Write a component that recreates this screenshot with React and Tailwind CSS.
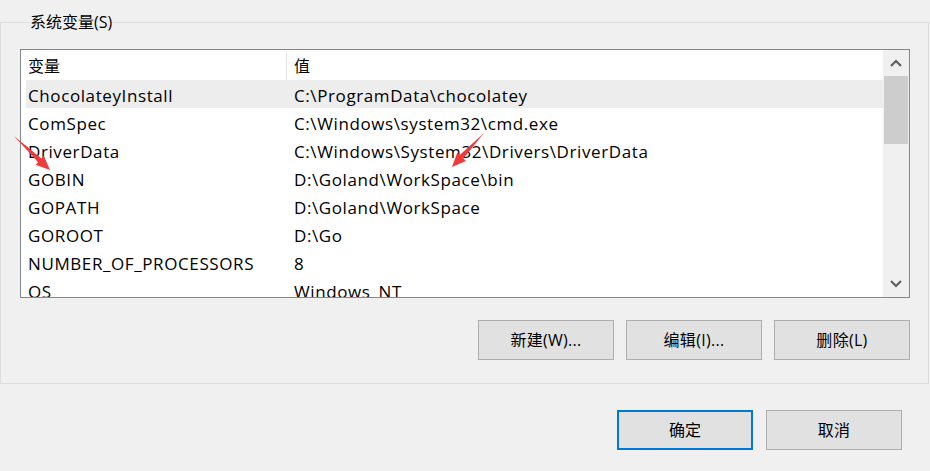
import React from 'react';

const rows = [
  ['ChocolateyInstall', 'C:\\ProgramData\\chocolatey'],
  ['ComSpec', 'C:\\Windows\\system32\\cmd.exe'],
  ['DriverData', 'C:\\Windows\\System32\\Drivers\\DriverData'],
  ['GOBIN', 'D:\\Goland\\WorkSpace\\bin'],
  ['GOPATH', 'D:\\Goland\\WorkSpace'],
  ['GOROOT', 'D:\\Go'],
  ['NUMBER_OF_PROCESSORS', '8'],
  ['OS', 'Windows_NT'],
];

const font = { fontFamily: '"Open Sans", "Noto Sans CJK SC", sans-serif' };

function WinButton({ children, primary }) {
  return (
    <button
      className={
        primary
          ? 'w-[136px] h-[40px] bg-[#e1e1e1] border-2 border-[#0078d7] text-[16px] text-black'
          : 'w-[136px] h-[40px] bg-[#e1e1e1] border border-[#adadad] text-[16px] tracking-[0.3px] text-black'
      }
    >
      {children}
    </button>
  );
}

function Chevron({ up }) {
  return (
    <svg width="12" height="8" viewBox="0 0 12 8">
      <path
        d={up ? 'M1 7 L6 2 L11 7' : 'M1 1 L6 6 L11 1'}
        fill="none"
        stroke="#606060"
        strokeWidth="2.2"
      />
    </svg>
  );
}

export default function App() {
  return (
    <div className="relative w-[930px] h-[471px] bg-[#f0f0f0] overflow-hidden text-black" style={font}>
      <fieldset className="w-[929px] border border-[#dcdcdc] pl-[19px] pr-[18px] pb-[23px] mt-[11px]">
        <legend className="ml-[9px] px-[1px] text-[16px] leading-[22px]">系统变量(S)</legend>

        <div className="mt-[16px] h-[249px] border border-[#828790] bg-white flex">
          <div className="flex-1 flex flex-col overflow-hidden">
            <div className="h-[30px] shrink-0 flex items-center text-[16px] pt-[1px]">
              <div className="w-[266px] pl-[7px] h-full flex items-center border-r border-[#e5e5e5]">变量</div>
              <div className="pl-[7px]">值</div>
            </div>
            {rows.map(([k, v], i) => (
              <div
                key={k}
                className={
                  i === 0
                    ? 'h-[28px] shrink-0 flex items-center pt-[3px] text-[17px] tracking-[0.6px] ml-[5px] bg-[#ededed]'
                    : 'h-[28px] shrink-0 flex items-center pt-[3px] text-[17px] tracking-[0.6px] ml-[5px]'
                }
              >
                <div className="w-[268px] pl-[2px] whitespace-nowrap">{k}</div>
                <div className="whitespace-nowrap">{v}</div>
              </div>
            ))}
          </div>
          <div className="w-[26px] shrink-0 bg-[#f0f0f0] flex flex-col items-center">
            <div className="h-[26px] w-full flex items-center justify-center">
              <Chevron up />
            </div>
            <div className="w-[24px] h-[68px] bg-[#cdcdcd]" />
            <div className="flex-1" />
            <div className="h-[26px] w-full flex items-center justify-center">
              <Chevron />
            </div>
          </div>
        </div>

        <div className="mt-[22px] flex justify-end gap-[12px]">
          <WinButton>新建(W)...</WinButton>
          <WinButton>编辑(I)...</WinButton>
          <WinButton>删除(L)</WinButton>
        </div>
      </fieldset>

      <div className="mt-[26px] pr-[28px] flex justify-end gap-[13px]">
        <WinButton primary>确定</WinButton>
        <WinButton>取消</WinButton>
      </div>

      <svg className="absolute inset-0 pointer-events-none" width="930" height="471">
        <polygon
          points="14,136 41.5,158.6 43.9,156 50,170 35.7,164.8 38.1,162.2"
          fill="#ef3a3a"
        />
        <polygon
          points="484,133 459.8,155.1 457.2,152.7 452,167 466,160.9 463.4,158.5"
          fill="#ef3a3a"
        />
      </svg>
    </div>
  );
}
